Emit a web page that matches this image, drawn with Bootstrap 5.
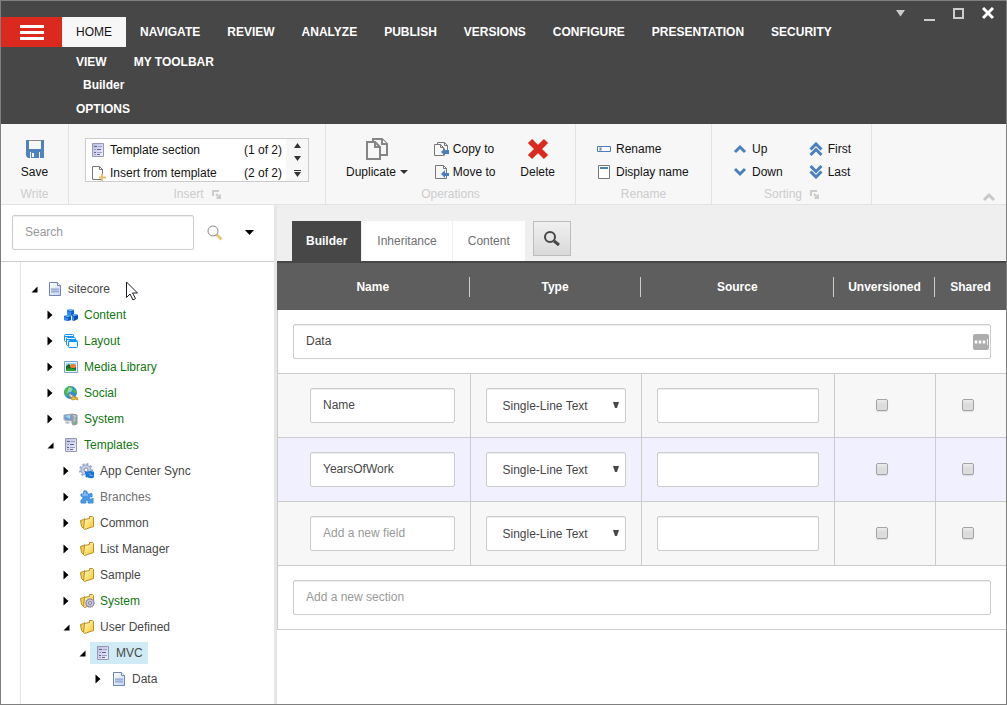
<!DOCTYPE html>
<html lang="en">
<head>
<meta charset="utf-8">
<meta name="viewport" content="width=device-width, initial-scale=1">
<title>Template Manager</title>
<link href="https://cdn.jsdelivr.net/npm/bootstrap@5.3.0/dist/css/bootstrap.min.css" rel="stylesheet">
<style>
  body { font: 12px/18px "Liberation Sans", Arial, sans-serif; color: #474747; }
  .app-window { border: 1px solid #7f7f7f; }
  button { font: inherit; color: inherit; background: none; border: 0; padding: 0; }
  svg { display: block; flex: none; }
  .symbol-store { position: absolute; width: 0; height: 0; }

  /* header */
  .app-header { background: #474747; color: #fff; }
  .menu-toggle { width: 61px; height: 30px; background: #dc291e; }
  .ribbon-tab { height: 30px; line-height: 30px; padding: 0 13px 0 14px; font-weight: 700; }
  .ribbon-tab.current { background: #f7f7f7; color: #131313; font-weight: 400; padding-right: 14px; }
  .strip-label { line-height: 17px; padding-left: 21px; font-weight: 700; }
  .window-controls { padding: 6px 12px 0 6px; gap: 18px; color: #ccc; }

  /* ribbon */
  .ribbon { background: #f7f7f7; border-bottom: 1px solid #e3e3e3; color: #131313; }
  .ribbon-group { border-right: 1px solid #e3e3e3; padding-top: 13px; }
  .ribbon-body { height: 47px; padding: 0 20px; }
  .group-write { width: 68px; }
  .group-insert { width: 257px; }
  .group-operations { width: 250px; }
  .group-rename { width: 136px; }
  .group-sorting { width: 160px; }
  .group-insert .ribbon-body { padding: 1px 16px 0; }
  .group-caption { height: 20px; color: #ccc; gap: 8px; }
  .tool-lg, .tool-sm { white-space: nowrap; }
  .tool-lg > span { height: 23px; }
  .tool-sm { height: 23px; gap: 4px; }
  .gallery { height: 44px; border: 1px solid #ccc; background: #fff; overflow: hidden; }
  .gallery-list { gap: 2px; }
  .gallery .tool-sm { padding: 0 4px; height: 21px; flex: none; }
  .gallery-scroll { width: 22px; background: #f7f7f7; }
  .collapse-ribbon { padding: 0 10px 2px 0; }

  /* sidebar */
  .side-pane { width: 276px; border-right: 3px solid #e6e6e6; }
  .search-bar { height: 57px; border-bottom: 1px solid #ccc; padding: 0 20px 1px 11px; }
  .text-field { height: 35px; width: 100%; border: 1px solid #ccc; border-radius: 2px; padding: 0 12px 1px; color: #474747;
    background: #fff; box-shadow: inset 0 1px 1px rgba(0,0,0,.07); font: inherit; }
  .text-field::placeholder { color: #999; opacity: 1; }
  .search-bar .text-field { width: 182px; }
  .search-find { margin-left: 13px; }
  .tree-pane { margin-left: 19px; border-left: 1px solid #e3e3e3; padding: 14px 0 12px 5px; }
  .tree-pane ul ul { padding-left: 16px; }
  .tree-row { height: 26px; }
  .tree-row > button { width: 16px; height: 16px; }
  .tree-row > button svg { margin: auto; }
  .tree-link { height: 22px; padding: 0 5px; gap: 5px; color: #474747; text-decoration: none; white-space: nowrap; }
  .tree-link.locked { color: #117711; }
  .tree-link.dimmed { color: #707070; }
  .tree-link.selected { background: #d0ebf6; }
  .pointer { position: absolute; left: 105px; top: 19px; }

  /* builder */
  .tab-strip { background: #efefef; height: 56px; padding: 16px 0 0 15px; gap: 1px; }
  .pane-tab { height: 40px; padding: 0 15px; background: #fff; color: #707070; }
  .pane-tab.current { background: #474747; color: #fff; font-weight: 700; padding: 0 14px; }
  .lookup { width: 38px; height: 35px; margin-left: 7px; border: 1px solid #bdbdbd; background: linear-gradient(#f0f0f0, #d9d9d9); }
  .builder-grid { width: 100%; table-layout: fixed; border-collapse: separate; border-spacing: 0; }
  .builder-grid th { background: #5e5e5e; color: #fff; border-top: 2px solid #474747; height: 49px; padding: 0 1px 0 0; text-align: center; }
  .builder-grid th span { display: block; line-height: 20px; border-right: 1px solid #ccc; }
  .builder-grid th:last-child span { border: 0; }
  .builder-grid td { height: 64px; padding: 14px 15px; border: 0 solid #ccc; border-width: 0 1px 1px 0; background: #f7f7f7; }
  .builder-grid td:first-child { border-left-width: 1px; padding-left: 32px; }
  .builder-grid td:last-child { border-right-width: 0; }
  .builder-grid td.section-cell { background: #fff; padding-left: 15px; }
  .builder-grid tr.highlight td { background: #f0f0ff; }
  .builder-grid td.check-cell { padding: 0 6px 2px 0; }
  .col-type { width: 171px; } .col-unversioned { width: 101px; } .col-shared { width: 70px; }
  select.text-field { appearance: none; padding: 0 16px;
    background: #fff url("data:image/svg+xml,%3Csvg xmlns='http://www.w3.org/2000/svg' width='6' height='6'%3E%3Cpath d='M0 0h6L4 6H2z' fill='%23474747'/%3E%3C/svg%3E") no-repeat right 6px top 13px; }
  .tick { appearance: none; display: block; width: 12px; height: 12px; margin: 0 auto; border: 1px solid #a3a3a3; border-radius: 2px;
    background: linear-gradient(#ededed, #dcdcdc 40%); box-shadow: 0 1px 1px rgba(0,0,0,.1); }
  .more-button { position: absolute; right: 2px; top: 10px; width: 16px; height: 16px; border-radius: 2px; background: #adadad; }
</style>
</head>
<body>
<svg class="symbol-store" aria-hidden="true">
  <defs>
    <linearGradient id="gold" x1="0" y1="0" x2="1" y2="1"><stop offset="0" stop-color="#fffbd0"/><stop offset="1" stop-color="#f5c828"/></linearGradient>
    <linearGradient id="paper" x1="0" y1="0" x2="1" y2="1"><stop offset="0" stop-color="#ffffff"/><stop offset="1" stop-color="#c4d4ee"/></linearGradient>
    <linearGradient id="lilac" x1="0" y1="0" x2="1" y2="1"><stop offset="0" stop-color="#b9bbdf"/><stop offset="1" stop-color="#f3f3ff"/></linearGradient>
  </defs>
  <symbol id="doc" viewBox="0 0 16 16"><path d="M2.500 1.500h8l3 3v10h-11z" fill="url(#paper)" stroke="#6f86b5"/><path d="M10.500 1.500v3h3" fill="#fff" stroke="#6f86b5"/><path d="M4 7h8v5H4z" fill="#b4c5e3"/><path d="M4 8.500h8M4 10.500h8" stroke="#9cb0d6"/></symbol>
  <symbol id="template" viewBox="0 0 16 16"><path d="M2.500 1.500h11v13h-11z" fill="url(#lilac)" stroke="#9799b4"/><path d="M4 4.500h3M7 7.500h4M4 10.500h2M7 12.500h3" stroke="#62638f"/><path d="M8 4.500h4M4 7.500h2M7 10.500h5M4 12.500h2" stroke="#9b9dc6"/></symbol>
  <symbol id="cubes" viewBox="0 0 16 16"><path d="M4 3l4-1 3 1v4l-3 2-4-1z" fill="#1464d8"/><path d="M4 3l4-1 3 1-3 1z" fill="#7cc4ff"/><path d="M1 9l4-1 3 1v4l-3 1-4-1z" fill="#0b57cf"/><path d="M1 9l4-1 3 1-3 1z" fill="#70baff"/><path d="M9 8l3-1 3 1v4l-4 2-2-1z" fill="#0c4db9"/><path d="M9 8l3-1 3 1-4 1z" fill="#67b4fa"/><path d="M9 9l2 1v4l-2-1zM4 4l4 1v4l-4-1zM1 10l4 1v3l-4-1z" fill="#2f8cf4"/></symbol>
  <symbol id="layout" viewBox="0 0 16 16"><g fill="#eef7ff" stroke="#1293f1"><rect x="1.500" y="1.500" width="9" height="7" rx="1"/><path d="M2 3.500h8"/><rect x="3.500" y="4.500" width="9" height="8" rx="1"/><path d="M4 6.500h8"/><rect x="5.500" y="7.500" width="9" height="7" rx="1"/><path d="M6 8.500h8"/></g></symbol>
  <symbol id="media" viewBox="0 0 16 16"><path d="M1.500 2.500h13v11h-13z" fill="#eef4fc" stroke="#7aa0cf"/><path d="M3 4h10v8H3z" fill="#9bd5f6"/><path d="M3 7l3-2 4 4 3-1v4H3z" fill="#126c2e"/><path d="M3 10q5-2 10 1v1H3z" fill="#30a336"/><ellipse cx="10" cy="7" rx="3" ry="2" fill="#f57b28"/></symbol>
  <symbol id="social" viewBox="0 0 16 16"><circle cx="7.500" cy="7.500" r="6.500" fill="#298ee0"/><path d="M2 4l4-3 4 1-2 3-3 1v4l-2 1-2-4zM10 4l3 1 1 4-4-2z" fill="#4cb648"/><path d="M6 2l4 2-2 3-4 1z" fill="#b9edc3" opacity=".7"/><path d="M6 8l8 5-3 1-5-3z" fill="#ddd" stroke="#8b8570"/><path d="M8 14l2-3 2 2 2-1 1 3-3-1-2 1z" fill="#edc42d" stroke="#c89c2c"/></symbol>
  <symbol id="system" viewBox="0 0 16 16"><path d="M1 4l8-1v7l-8-1z" fill="#6f9ccf" stroke="#aaadb5"/><path d="M2 5l5-1v4z" fill="#a3d6ff"/><path d="M9 3l5 1v9l-4 1-1-2z" fill="#bdc1c9" stroke="#8d9099"/><path d="M10 5v8M13 6v6" stroke="#8b8f9a"/><path d="M3 10l4 1-2 2-3-1z" fill="#b5b9c2"/><circle cx="12" cy="12" r="1" fill="#3cba62"/></symbol>
  <symbol id="gear" viewBox="0 0 16 16"><circle cx="7" cy="7" r="5" fill="#c7d0e8" stroke="#8fa0c8" stroke-width="1"/><circle cx="7" cy="7" r="6" fill="none" stroke="#95a6cc" stroke-width="2" stroke-dasharray="2 2"/><circle cx="7" cy="7" r="2" fill="#fff" stroke="#7388b5"/></symbol>
  <symbol id="sync" viewBox="0 0 16 16"><use href="#gear"/><path d="M6 11V8l2 1q3-2 6 0l1-1v4h-4l1-1q-2-1-4 0z" fill="#1676dd"/><path d="M15 11v3l-1 1q-3 1-6-1l-1 1v-4h4l-1 1q2 1 4 0z" fill="#1676dd"/></symbol>
  <symbol id="puzzle" viewBox="0 0 16 16"><path d="M5 2q4-1 3 3h4V4l1 1v3q-3-1-3 1t3 1l1-1v5H9q1-3-1-3t-1 3H2v-3q2 0 2-2T2 7V5h3Q4 3 5 2z" fill="#4899eb" stroke="#3b87d6"/><path d="M6 3v3M3 6h6" stroke="#a4d2ff"/></symbol>
  <symbol id="folder" viewBox="0 0 16 16"><path d="M1.500 5.500l3-1 1-1v9l-1 1-2-2z" fill="#f5d152" stroke="#b98d22"/><path d="M5.500 4.500l5-1v-2h3l1 1v9l-9 3-1-1z" fill="url(#gold)" stroke="#b98d22"/></symbol>
  <symbol id="folder-gear" viewBox="0 0 16 16"><use href="#folder"/><circle cx="11" cy="10" r="4" fill="#c6c6df" stroke="#8c8daf"/><circle cx="11" cy="10" r="4.500" fill="none" stroke="#8f90b4" stroke-dasharray="1 1"/><circle cx="11" cy="10" r="1.500" fill="#eee" stroke="#7c7d9f"/></symbol>
  <symbol id="arrow-open" viewBox="0 0 7 7"><path d="M6.500 0.500v6h-6z" fill="#000"/></symbol>
  <symbol id="arrow-closed" viewBox="0 0 6 10"><path d="M0.500 0.500L5.500 5l-5 4.500z" fill="#000"/></symbol>
  <symbol id="launcher" viewBox="0 0 9 9"><path d="M1 6V1h6M4 4l3 3M4.500 8H8V4.500" fill="none" stroke="#ccc" stroke-width="2"/></symbol>
  <symbol id="chevron" viewBox="0 0 14 10"><path d="M2 8l5-5 5 5" fill="none" stroke="currentColor" stroke-width="3"/></symbol>
  <symbol id="double-chevron" viewBox="0 0 14 14"><path d="M1.500 7.500L7 2l5.500 5.500M1.500 13L7 7.500l5.500 5.500" fill="none" stroke="currentColor" stroke-width="3"/></symbol>
</svg>

<div class="app-window d-flex flex-column min-vh-100">
  <header class="app-header d-flex align-items-start">
    <button class="menu-toggle mt-3 flex-shrink-0" aria-label="Menu"><svg width="24" height="15" class="mx-auto"><path d="M0 1.500h24M0 7.500h24M0 13.500h24" stroke="#fff" stroke-width="3"/></svg></button>
    <div class="mt-3 flex-grow-1">
      <nav class="d-flex flex-wrap" aria-label="Ribbon tabs">
        <button class="ribbon-tab current">HOME</button>
        <button class="ribbon-tab">NAVIGATE</button>
        <button class="ribbon-tab">REVIEW</button>
        <button class="ribbon-tab">ANALYZE</button>
        <button class="ribbon-tab">PUBLISH</button>
        <button class="ribbon-tab">VERSIONS</button>
        <button class="ribbon-tab">CONFIGURE</button>
        <button class="ribbon-tab">PRESENTATION</button>
        <button class="ribbon-tab">SECURITY</button>
        <button class="ribbon-tab">VIEW</button>
        <button class="ribbon-tab">MY TOOLBAR</button>
      </nav>
      <div class="strip-label">Builder</div>
      <button class="ribbon-tab">OPTIONS</button>
    </div>
    <div class="window-controls d-flex flex-shrink-0">
      <button aria-label="Window menu"><svg width="11" height="14"><path d="M1 3h9L5.500 9.500z" fill="currentColor"/></svg></button>
      <button aria-label="Minimize"><svg width="11" height="14"><path d="M0 13h11" stroke="currentColor" stroke-width="2"/></svg></button>
      <button aria-label="Maximize"><svg width="11" height="14"><path d="M1 2h9v9H1z" fill="none" stroke="currentColor" stroke-width="2"/></svg></button>
      <button aria-label="Close"><svg width="12" height="14"><path d="M1 1l10 10M11 1L1 11" stroke="#fff" stroke-width="3"/></svg></button>
    </div>
  </header>

  <section class="ribbon d-flex" aria-label="Ribbon">
    <div class="ribbon-group group-write">
      <div class="ribbon-body d-flex justify-content-center">
        <button class="tool-lg"><span class="d-flex align-items-center justify-content-center"><svg width="18" height="18"><path d="M0 0h3v9h12V0h3v18H2l-2-2z" fill="#4f83bd"/><path d="M3 .500h12" stroke="#888"/><path d="M4 12h10v6H4z" fill="#f7f7f7"/><path d="M5 12h8v6H5z" fill="#4f83bd"/><path d="M6 13h2v4H6z" fill="#f7f7f7"/></svg></span><span class="d-flex align-items-center">Save</span></button>
      </div>
      <div class="group-caption d-flex align-items-center justify-content-center">Write</div>
    </div>
    <div class="ribbon-group group-insert">
      <div class="ribbon-body">
        <div class="gallery d-flex">
          <div class="gallery-list d-flex flex-column flex-grow-1">
            <button class="tool-sm d-flex align-items-center w-100"><svg width="16" height="16"><use href="#template"/></svg><span>Template section</span><span class="ms-auto">(1 of 2)</span></button>
            <button class="tool-sm d-flex align-items-center w-100"><svg width="16" height="16"><path d="M2.500 1.500h7l3 3v10h-10z" fill="#fff" stroke="#777"/><path d="M9.500 1.500v3h3" fill="none" stroke="#777"/><path d="M12 9v7M9 12.500h7" stroke="#e9bd6d" stroke-width="2"/></svg><span>Insert from template</span><span class="ms-auto">(2 of 2)</span></button>
          </div>
          <div class="gallery-scroll d-flex flex-column align-items-center justify-content-around">
            <button aria-label="Scroll up"><svg width="7" height="5"><path d="M0 5h7L3.500 0z" fill="#333"/></svg></button>
            <button aria-label="Scroll down"><svg width="7" height="5"><path d="M0 0h7L3.500 5z" fill="#333"/></svg></button>
            <button aria-label="Show all"><svg width="7" height="7"><path d="M0 2h7L3.500 7z" fill="#333"/><path d="M0 .500h7" stroke="#333"/></svg></button>
          </div>
        </div>
      </div>
      <div class="group-caption d-flex align-items-center justify-content-center">Insert <svg width="9" height="9"><use href="#launcher"/></svg></div>
    </div>
    <div class="ribbon-group group-operations">
      <div class="ribbon-body d-flex justify-content-between">
        <button class="tool-lg"><span class="d-flex align-items-center justify-content-center"><svg width="22" height="22"><g fill="#f7f7f7" stroke="#858585" stroke-width="2"><path d="M7 1h9l5 5v11H7z"/><path d="M16 1v5h5"/><path d="M1 4h8l5 5v12H1z"/><path d="M9 4v5h5" fill="none"/></g></svg></span><span class="d-flex align-items-center gap-1">Duplicate <svg width="8" height="4"><path d="M0 0h8L4 4z" fill="#333"/></svg></span></button>
        <div>
          <button class="tool-sm d-flex align-items-center"><svg width="16" height="16"><g fill="#f7f7f7" stroke="#777"><path d="M4.500 1.500h7l3 3v8h-10z"/><path d="M1.500 3.500h6l3 3v8h-9z"/><path d="M7.500 3.500v3h3M11.500 1.500v3h3" fill="none"/></g><path d="M8 11l4-4v2h4v4h-4v2z" fill="#4a80bd"/></svg><span>Copy to</span></button>
          <button class="tool-sm d-flex align-items-center"><svg width="16" height="16"><path d="M2.500 1.500h8l3 3v10h-11z" fill="#f7f7f7" stroke="#777"/><path d="M10.500 1.500v3h3" fill="none" stroke="#777"/><path d="M8 10l4-4v3h4v3h-4v2z" fill="#4a80bd"/></svg><span>Move to</span></button>
        </div>
        <button class="tool-lg"><span class="d-flex align-items-center justify-content-center"><svg width="22" height="22"><path d="M3 3l16 16M19 3L3 19" stroke="#dc291e" stroke-width="6"/></svg></span><span class="d-flex align-items-center">Delete</span></button>
      </div>
      <div class="group-caption d-flex align-items-center justify-content-center">Operations</div>
    </div>
    <div class="ribbon-group group-rename">
      <div class="ribbon-body">
        <button class="tool-sm d-flex align-items-center"><svg width="16" height="16"><path d="M1.500 5.500h13v5h-13z" fill="#fff" stroke="#4a80bd"/><path d="M3 7h3M4.500 7v2M3 9h3" stroke="#888"/></svg><span>Rename</span></button>
        <button class="tool-sm d-flex align-items-center"><svg width="16" height="16"><path d="M2.500 1.500h11v13h-11z" fill="#fff" stroke="#777"/><path d="M4 4h8" stroke="#4a80bd" stroke-width="2"/></svg><span>Display name</span></button>
      </div>
      <div class="group-caption d-flex align-items-center justify-content-center">Rename</div>
    </div>
    <div class="ribbon-group group-sorting">
      <div class="ribbon-body d-flex justify-content-between">
        <div>
          <button class="tool-sm d-flex align-items-center"><svg width="16" height="10" color="#4a80bd"><use href="#chevron"/></svg><span>Up</span></button>
          <button class="tool-sm d-flex align-items-center"><svg width="16" height="10" viewBox="0 0 14 10" color="#4a80bd"><path d="M2 2l5 5 5-5" fill="none" stroke="currentColor" stroke-width="3"/></svg><span>Down</span></button>
        </div>
        <div>
          <button class="tool-sm d-flex align-items-center"><svg width="16" height="14" color="#4a80bd"><use href="#double-chevron"/></svg><span>First</span></button>
          <button class="tool-sm d-flex align-items-center"><svg width="16" height="14" viewBox="0 0 14 14" color="#4a80bd"><path d="M1.500 1L7 6.500 12.500 1M1.500 6.500L7 12l5.500-5.500" fill="none" stroke="currentColor" stroke-width="3"/></svg><span>Last</span></button>
        </div>
      </div>
      <div class="group-caption d-flex align-items-center justify-content-center">Sorting <svg width="9" height="9"><use href="#launcher"/></svg></div>
    </div>
    <button class="collapse-ribbon ms-auto align-self-end" aria-label="Collapse ribbon"><svg width="14" height="10" color="#c8c8c8"><use href="#chevron"/></svg></button>
  </section>

  <main class="d-flex flex-grow-1">
    <aside class="side-pane d-flex flex-column flex-shrink-0">
      <form class="search-bar d-flex align-items-center">
        <input class="text-field" type="text" placeholder="Search" aria-label="Search">
        <button type="button" class="search-find" aria-label="Find"><svg width="16" height="16"><path d="M9.500 9.500l5 5" stroke="#ebc57d" stroke-width="3"/><circle cx="6" cy="6" r="5" fill="#fff" stroke="#8a8a8a"/></svg></button>
        <button type="button" class="ms-auto" aria-label="Search options"><svg width="9" height="5"><path d="M0 0h9L4.500 5z" fill="#000"/></svg></button>
      </form>
      <div class="tree-pane flex-grow-1 position-relative">
        <ul class="list-unstyled mb-0">
          <li><div class="tree-row d-flex align-items-center"><button aria-label="Collapse sitecore"><svg width="7" height="7"><use href="#arrow-open"/></svg></button><a href="#" class="tree-link d-flex align-items-center"><svg width="16" height="16"><use href="#doc"/></svg>sitecore</a></div>
            <ul class="list-unstyled">
              <li class="tree-row d-flex align-items-center"><button aria-label="Expand Content"><svg width="6" height="10"><use href="#arrow-closed"/></svg></button><a href="#" class="tree-link locked d-flex align-items-center"><svg width="16" height="16"><use href="#cubes"/></svg>Content</a></li>
              <li class="tree-row d-flex align-items-center"><button aria-label="Expand Layout"><svg width="6" height="10"><use href="#arrow-closed"/></svg></button><a href="#" class="tree-link locked d-flex align-items-center"><svg width="16" height="16"><use href="#layout"/></svg>Layout</a></li>
              <li class="tree-row d-flex align-items-center"><button aria-label="Expand Media Library"><svg width="6" height="10"><use href="#arrow-closed"/></svg></button><a href="#" class="tree-link locked d-flex align-items-center"><svg width="16" height="16"><use href="#media"/></svg>Media Library</a></li>
              <li class="tree-row d-flex align-items-center"><button aria-label="Expand Social"><svg width="6" height="10"><use href="#arrow-closed"/></svg></button><a href="#" class="tree-link locked d-flex align-items-center"><svg width="16" height="16"><use href="#social"/></svg>Social</a></li>
              <li class="tree-row d-flex align-items-center"><button aria-label="Expand System"><svg width="6" height="10"><use href="#arrow-closed"/></svg></button><a href="#" class="tree-link locked d-flex align-items-center"><svg width="16" height="16"><use href="#system"/></svg>System</a></li>
              <li><div class="tree-row d-flex align-items-center"><button aria-label="Collapse Templates"><svg width="7" height="7"><use href="#arrow-open"/></svg></button><a href="#" class="tree-link locked d-flex align-items-center"><svg width="16" height="16"><use href="#template"/></svg>Templates</a></div>
                <ul class="list-unstyled">
                  <li class="tree-row d-flex align-items-center"><button aria-label="Expand App Center Sync"><svg width="6" height="10"><use href="#arrow-closed"/></svg></button><a href="#" class="tree-link d-flex align-items-center"><svg width="16" height="16"><use href="#sync"/></svg>App Center Sync</a></li>
                  <li class="tree-row d-flex align-items-center"><button aria-label="Expand Branches"><svg width="6" height="10"><use href="#arrow-closed"/></svg></button><a href="#" class="tree-link dimmed d-flex align-items-center"><svg width="16" height="16"><use href="#puzzle"/></svg>Branches</a></li>
                  <li class="tree-row d-flex align-items-center"><button aria-label="Expand Common"><svg width="6" height="10"><use href="#arrow-closed"/></svg></button><a href="#" class="tree-link d-flex align-items-center"><svg width="16" height="16"><use href="#folder"/></svg>Common</a></li>
                  <li class="tree-row d-flex align-items-center"><button aria-label="Expand List Manager"><svg width="6" height="10"><use href="#arrow-closed"/></svg></button><a href="#" class="tree-link d-flex align-items-center"><svg width="16" height="16"><use href="#folder"/></svg>List Manager</a></li>
                  <li class="tree-row d-flex align-items-center"><button aria-label="Expand Sample"><svg width="6" height="10"><use href="#arrow-closed"/></svg></button><a href="#" class="tree-link d-flex align-items-center"><svg width="16" height="16"><use href="#folder"/></svg>Sample</a></li>
                  <li class="tree-row d-flex align-items-center"><button aria-label="Expand System templates"><svg width="6" height="10"><use href="#arrow-closed"/></svg></button><a href="#" class="tree-link locked d-flex align-items-center"><svg width="16" height="16"><use href="#folder-gear"/></svg>System</a></li>
                  <li><div class="tree-row d-flex align-items-center"><button aria-label="Collapse User Defined"><svg width="7" height="7"><use href="#arrow-open"/></svg></button><a href="#" class="tree-link d-flex align-items-center"><svg width="16" height="16"><use href="#folder"/></svg>User Defined</a></div>
                    <ul class="list-unstyled">
                      <li><div class="tree-row d-flex align-items-center"><button aria-label="Collapse MVC"><svg width="7" height="7"><use href="#arrow-open"/></svg></button><a href="#" class="tree-link selected d-flex align-items-center"><svg width="16" height="16"><use href="#template"/></svg>MVC</a></div>
                        <ul class="list-unstyled">
                          <li class="tree-row d-flex align-items-center"><button aria-label="Expand Data"><svg width="6" height="10"><use href="#arrow-closed"/></svg></button><a href="#" class="tree-link d-flex align-items-center"><svg width="16" height="16"><use href="#doc"/></svg>Data</a></li>
                        </ul>
                      </li>
                    </ul>
                  </li>
                </ul>
              </li>
            </ul>
          </li>
        </ul>
        <svg class="pointer" width="13" height="20" aria-hidden="true"><path d="M.500 1v15.500l3.500-3.500 3 6 2.500-1.500-3-5.500H11.500z" fill="#fff" stroke="#1c1c28"/></svg>
      </div>
    </aside>

    <section class="flex-grow-1">
      <div class="tab-strip d-flex align-items-start">
        <button class="pane-tab current">Builder</button>
        <button class="pane-tab">Inheritance</button>
        <button class="pane-tab">Content</button>
        <button class="lookup" aria-label="Search in template"><svg width="18" height="18" class="mx-auto"><circle cx="7" cy="7" r="5" fill="none" stroke="#474747" stroke-width="2"/><path d="M11 11l5 4" stroke="#474747" stroke-width="3"/></svg></button>
      </div>
      <table class="builder-grid">
        <colgroup><col><col class="col-type"><col><col class="col-unversioned"><col class="col-shared"></colgroup>
        <thead>
          <tr><th><span>Name</span></th><th><span>Type</span></th><th><span>Source</span></th><th><span>Unversioned</span></th><th><span>Shared</span></th></tr>
        </thead>
        <tbody>
          <tr><td class="section-cell" colspan="5"><div class="position-relative"><input class="text-field d-block" type="text" value="Data" aria-label="Section name"><button class="more-button" aria-label="More"><svg width="16" height="16"><path d="M3 6.500v3M7 6.500v3M11 6.500v3" stroke="#fff" stroke-width="2.500"/><path d="M14.500 5v6" stroke="#eee"/></svg></button></div></td></tr>
          <tr>
            <td><input class="text-field d-block" type="text" value="Name" aria-label="Field name"></td>
            <td><select class="text-field d-block" aria-label="Field type"><option>Single-Line Text</option></select></td>
            <td><input class="text-field d-block" type="text" aria-label="Source"></td>
            <td class="check-cell"><input class="tick" type="checkbox" aria-label="Unversioned"></td>
            <td class="check-cell"><input class="tick" type="checkbox" aria-label="Shared"></td>
          </tr>
          <tr class="highlight">
            <td><input class="text-field d-block" type="text" value="YearsOfWork" aria-label="Field name"></td>
            <td><select class="text-field d-block" aria-label="Field type"><option>Single-Line Text</option></select></td>
            <td><input class="text-field d-block" type="text" aria-label="Source"></td>
            <td class="check-cell"><input class="tick" type="checkbox" aria-label="Unversioned"></td>
            <td class="check-cell"><input class="tick" type="checkbox" aria-label="Shared"></td>
          </tr>
          <tr>
            <td><input class="text-field d-block" type="text" placeholder="Add a new field" aria-label="New field name"></td>
            <td><select class="text-field d-block" aria-label="Field type"><option>Single-Line Text</option></select></td>
            <td><input class="text-field d-block" type="text" aria-label="Source"></td>
            <td class="check-cell"><input class="tick" type="checkbox" aria-label="Unversioned"></td>
            <td class="check-cell"><input class="tick" type="checkbox" aria-label="Shared"></td>
          </tr>
          <tr><td class="section-cell" colspan="5"><input class="text-field d-block" type="text" placeholder="Add a new section" aria-label="New section name"></td></tr>
        </tbody>
      </table>
    </section>
  </main>
</div>
<script src="https://cdn.jsdelivr.net/npm/bootstrap@5.3.0/dist/js/bootstrap.bundle.min.js"></script>
</body>
</html>
